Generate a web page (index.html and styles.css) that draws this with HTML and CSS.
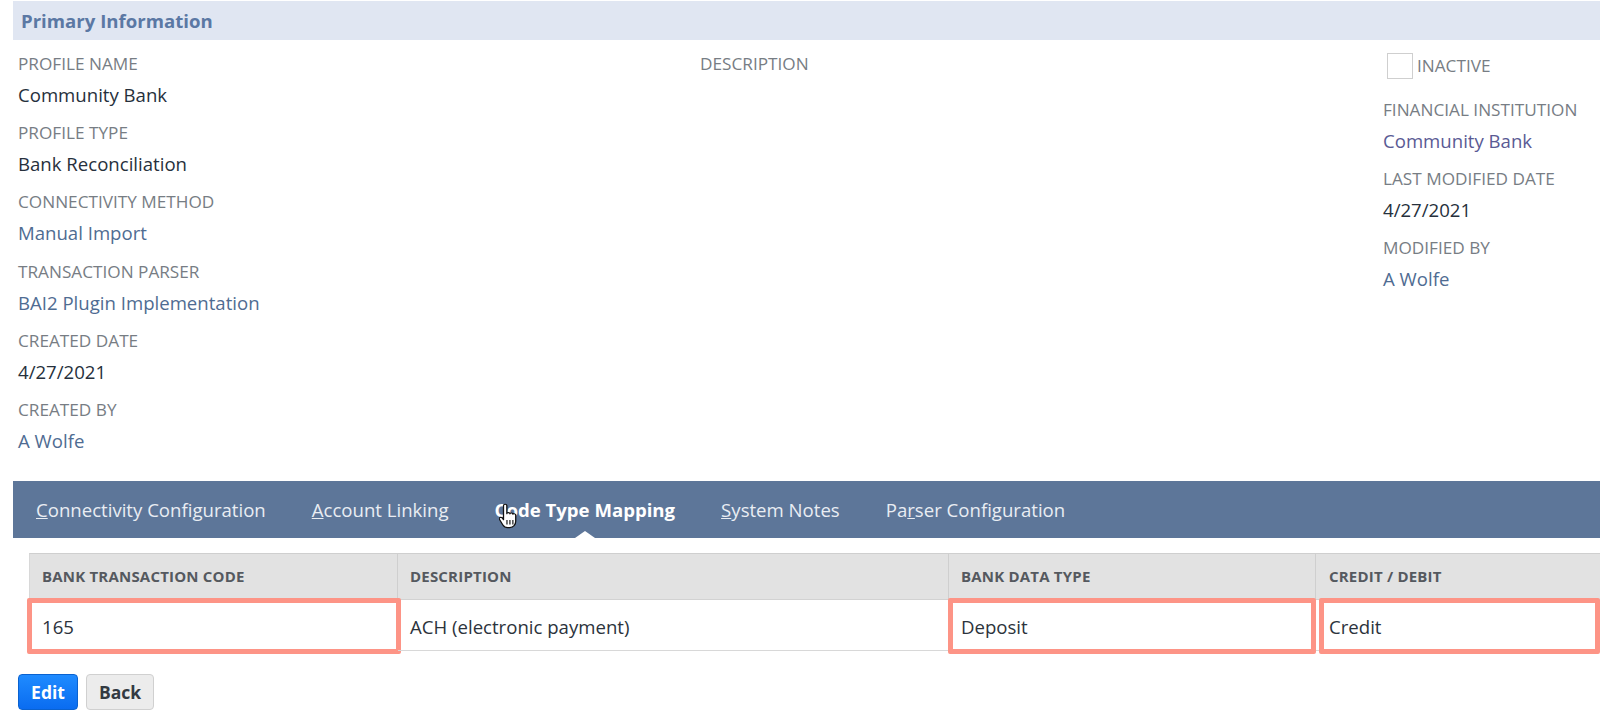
FILE: index.html
```html
<!DOCTYPE html>
<html lang="en">
<head>
<meta charset="utf-8">
<title>Community Bank</title>
<link rel="stylesheet" href="styles.css">
</head>
<body>
<main class="page">
  <h2 class="section-title">Primary Information</h2>
  <section class="info">
    <div class="col col-left">
      <div class="field"><div class="label">PROFILE NAME</div><div class="value">Community Bank</div></div>
      <div class="field"><div class="label">PROFILE TYPE</div><div class="value">Bank Reconciliation</div></div>
      <div class="field"><div class="label">CONNECTIVITY METHOD</div><div class="value link">Manual Import</div></div>
      <div class="field"><div class="label">TRANSACTION PARSER</div><div class="value link">BAI2 Plugin Implementation</div></div>
      <div class="field"><div class="label">CREATED DATE</div><div class="value">4/27/2021</div></div>
      <div class="field"><div class="label">CREATED BY</div><div class="value link">A Wolfe</div></div>
    </div>
    <div class="col col-mid">
      <div class="field"><div class="label">DESCRIPTION</div></div>
    </div>
    <div class="col col-right">
      <div class="check-row"><span class="checkbox"></span><span class="label">INACTIVE</span></div>
      <div class="field"><div class="label">FINANCIAL INSTITUTION</div><div class="value link-purple">Community Bank</div></div>
      <div class="field"><div class="label">LAST MODIFIED DATE</div><div class="value">4/27/2021</div></div>
      <div class="field"><div class="label">MODIFIED BY</div><div class="value link">A Wolfe</div></div>
    </div>
  </section>
  <nav class="tabs">
    <a class="tab"><u>C</u>onnectivity Configuration</a>
    <a class="tab"><u>A</u>ccount Linking</a>
    <a class="tab active">Code Type Mapping
      <svg class="cursor" viewBox="2 0 14 23" width="18" height="26" preserveAspectRatio="none" aria-hidden="true"><path d="M5.5 2.2c0-1.500 2.600-1.500 2.600 0v7.200c0-1.200 2.400-1.200 2.400.2 0-1.100 2.300-1.100 2.300.4 0-.9 2.200-.8 2.200.7v5.500c0 2.900-1.700 5.600-4.600 5.600H8.700c-1.900 0-2.900-1-3.800-2.600L2.400 14.600c-.8-1.500 1-2.600 2.100-1.400l1 1.600z" fill="#fff" stroke="#111" stroke-width="1" stroke-linejoin="round"/><path d="M8.200 15v4M10.500 15v4M12.800 15v4" stroke="#111" stroke-width=".9" fill="none"/></svg>
    </a>
    <a class="tab"><u>S</u>ystem Notes</a>
    <a class="tab">Pa<u>r</u>ser Configuration</a>
  </nav>
  <section class="grid">
    <div class="cell head">BANK TRANSACTION CODE</div>
    <div class="cell head">DESCRIPTION</div>
    <div class="cell head">BANK DATA TYPE</div>
    <div class="cell head last">CREDIT / DEBIT</div>
    <div class="cell body-cell">165<span class="mark mark-a"></span></div>
    <div class="cell body-cell">ACH (electronic payment)</div>
    <div class="cell body-cell">Deposit<span class="mark mark-b"></span></div>
    <div class="cell body-cell last">Credit<span class="mark mark-c"></span></div>
  </section>
  <div class="actions">
    <button class="btn primary">Edit</button>
    <button class="btn">Back</button>
  </div>
</main>
</body>
</html>
```
FILE: styles.css
```css
* { box-sizing: border-box; }
html, body { margin: 0; height: 713px; overflow: hidden; background: #fff; }
body { font-family: "Open Sans", "Liberation Sans", sans-serif; color: #26303c; }
.page { padding: 1px 0 0 13px; width: 1600px; }
.section-title {
  margin: 0; height: 39px; line-height: 39px; padding-left: 8px;
  background: #e0e6f2; color: #5b78a4; font-size: 18.600px; font-weight: 700;
}
.info { display: flex; height: 441px; padding: 10px 0 0 5px; }
.col-left { width: 682px; }
.col-mid { width: 683px; }
.field { height: 69.200px; }
.label { font-size: 17.200px; line-height: 28px; color: #777d84; white-space: nowrap; }
.value { font-size: 18.600px; line-height: 28px; margin-top: 3px; white-space: nowrap; color: #26303c; }
.value.link { color: #4f6c92; }
.value.link-purple { color: #5a5a94; }
.check-row { display: flex; align-items: center; gap: 4px; height: 30px; margin: 1px 0 14.500px 4px; }
.checkbox { width: 26px; height: 26px; border: 1px solid #cfcfcf; background: #fff; display: block; }
.tabs {
  display: flex; align-items: flex-start; gap: 46px; height: 57px; padding-left: 23px;
  background: #5d7699;
}
.tab { position: relative; font-size: 18.600px; line-height: 57px; color: #e9edf3; white-space: nowrap; }
.tab.active { font-weight: 700; color: #fff; }
.tab.active::after {
  content: ""; position: absolute; left: 50%; bottom: 0; margin-left: -10px;
  border-left: 10px solid transparent; border-right: 10px solid transparent; border-bottom: 7px solid #fff;
}
.cursor { position: absolute; left: 4px; top: 22px; }
.grid {
  display: grid; grid-template-columns: 368px 551px 367px 1fr; margin: 15px 0 0 16px;
  border-top: 1px solid #cfcfcf; border-left: 1px solid #d8d8d8;
}
.cell { position: relative; display: flex; align-items: center; padding-left: 12px; white-space: nowrap; }
.head {
  height: 46px; padding-bottom: 2px; background: #e2e2e2; font-size: 15px; font-weight: 700; color: #55595f;
  letter-spacing: 0.2px; border-right: 1px solid #cfcfcf; border-bottom: 1px solid #d2d2d2;
}
.cell.last { border-right: 0; padding-left: 13px; }
.body-cell { height: 51px; padding-top: 3px; font-size: 18.600px; color: #2c333c; border-bottom: 1px solid #d8d8d8; }
.mark { position: absolute; border: 5px solid #fd9486; border-radius: 2px; pointer-events: none; }
.mark-a { left: -3px; top: -2px; width: 374px; height: 56px; }
.mark-b { left: -1px; top: -2px; width: 368px; height: 56px; }
.mark-c { left: 3px; top: -2px; right: 0; height: 56px; }
.actions { display: flex; gap: 8px; margin: 23px 0 0 5px; }
.btn {
  height: 36px; width: 68px; border: 1px solid #d0d0d0; border-radius: 4px; background: #ececec;
  font-family: inherit; font-size: 17.500px; font-weight: 700; color: #333a42; padding: 0;
}
.btn.primary {
  width: 60px; color: #fff; border-color: #0a62d0;
  background: linear-gradient(#1f8bff, #0a6cf0);
}
```
